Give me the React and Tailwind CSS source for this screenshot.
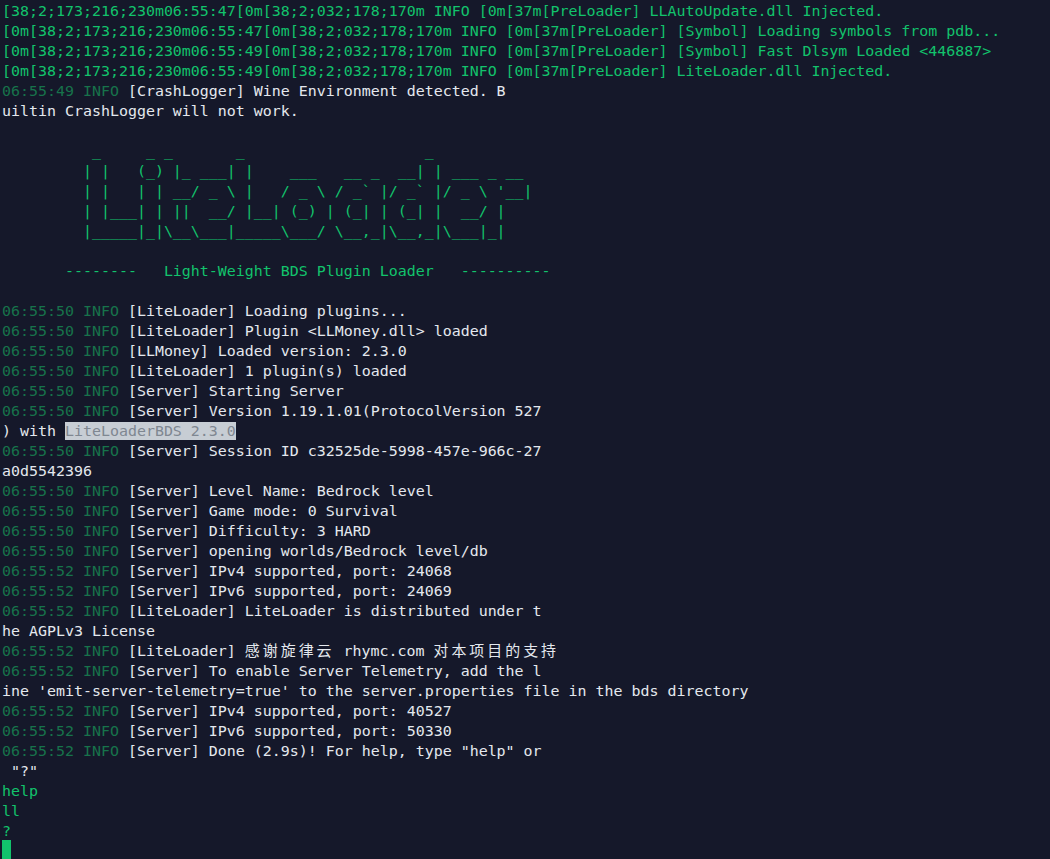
import React from 'react';

const colors = {
  hi: 'text-[#12c36c]',
  dim: 'text-[#17734b]',
  fg: 'text-[#e4e8ee]',
  sel: 'text-[#7f8791] bg-[#c7cdd4]',
};

const pre = '[0m[38;2;173;216;230m';
const mid = '[0m[38;2;032;178;170m INFO [0m[37m[PreLoader] ';

const hi = (t) => [{ t, c: 'hi' }];
const log = (time, msg) => [
  { t: `${time} INFO `, c: 'dim' },
  { t: msg, c: 'fg' },
];
const plain = (t) => [{ t, c: 'fg' }];

const art = [
  '          _     _ _       _                    _',
  '         | |   (_) |_ ___| |    ___   __ _  __| | ___ _ __',
  "         | |   | | __/ _ \\ |   / _ \\ / _` |/ _` |/ _ \\ '__|",
  '         | |___| | ||  __/ |__| (_) | (_| | (_| |  __/ |',
  '         |_____|_|\\__\\___|_____\\___/ \\__,_|\\__,_|\\___|_|',
];

const lines = [
  hi('[38;2;173;216;230m06:55:47' + mid + 'LLAutoUpdate.dll Injected.'),
  hi(pre + '06:55:47' + mid + '[Symbol] Loading symbols from pdb...'),
  hi(pre + '06:55:49' + mid + '[Symbol] Fast Dlsym Loaded <446887>'),
  hi(pre + '06:55:49' + mid + 'LiteLoader.dll Injected.'),
  log('06:55:49', '[CrashLogger] Wine Environment detected. B'),
  plain('uiltin CrashLogger will not work.'),
  [],
  ...art.map(hi),
  [],
  hi('       --------   Light-Weight BDS Plugin Loader   ----------'),
  [],
  log('06:55:50', '[LiteLoader] Loading plugins...'),
  log('06:55:50', '[LiteLoader] Plugin <LLMoney.dll> loaded'),
  log('06:55:50', '[LLMoney] Loaded version: 2.3.0'),
  log('06:55:50', '[LiteLoader] 1 plugin(s) loaded'),
  log('06:55:50', '[Server] Starting Server'),
  log('06:55:50', '[Server] Version 1.19.1.01(ProtocolVersion 527'),
  [
    { t: ') with ', c: 'fg' },
    { t: 'LiteLoaderBDS 2.3.0', c: 'sel' },
  ],
  log('06:55:50', '[Server] Session ID c32525de-5998-457e-966c-27'),
  plain('a0d5542396'),
  log('06:55:50', '[Server] Level Name: Bedrock level'),
  log('06:55:50', '[Server] Game mode: 0 Survival'),
  log('06:55:50', '[Server] Difficulty: 3 HARD'),
  log('06:55:50', '[Server] opening worlds/Bedrock level/db'),
  log('06:55:52', '[Server] IPv4 supported, port: 24068'),
  log('06:55:52', '[Server] IPv6 supported, port: 24069'),
  log('06:55:52', '[LiteLoader] LiteLoader is distributed under t'),
  plain('he AGPLv3 License'),
  [
    { t: '06:55:52 INFO ', c: 'dim' },
    { t: '[LiteLoader] ', c: 'fg' },
    { t: '感谢旋律云', c: 'fg', wide: true },
    { t: ' rhymc.com ', c: 'fg' },
    { t: '对本项目的支持', c: 'fg', wide: true },
  ],
  log('06:55:52', '[Server] To enable Server Telemetry, add the l'),
  plain("ine 'emit-server-telemetry=true' to the server.properties file in the bds directory"),
  log('06:55:52', '[Server] IPv4 supported, port: 40527'),
  log('06:55:52', '[Server] IPv6 supported, port: 50330'),
  log('06:55:52', '[Server] Done (2.9s)! For help, type "help" or'),
  plain(' "?"'),
  hi('help'),
  hi('ll'),
  hi('?'),
];

function Line({ segs }) {
  return (
    <div className="h-5 whitespace-pre">
      {segs.map((s, i) => (
        <span key={i} className={`${colors[s.c]} ${s.wide ? 'tracking-[3px]' : ''}`}>
          {s.t}
        </span>
      ))}
    </div>
  );
}

export default function App() {
  return (
    <div
      className="h-[859px] w-[1050px] overflow-hidden bg-[#15182a] px-[2px] pt-px text-[14.95px] leading-5"
      style={{ fontFamily: '"DejaVu Sans Mono", "Noto Sans CJK SC", monospace' }}
    >
      {lines.map((segs, i) => (
        <Line key={i} segs={segs} />
      ))}
      <div className="-mt-px h-5">
        <span className="inline-block h-5 w-[9px] bg-[#12c36c] align-top" />
      </div>
    </div>
  );
}
